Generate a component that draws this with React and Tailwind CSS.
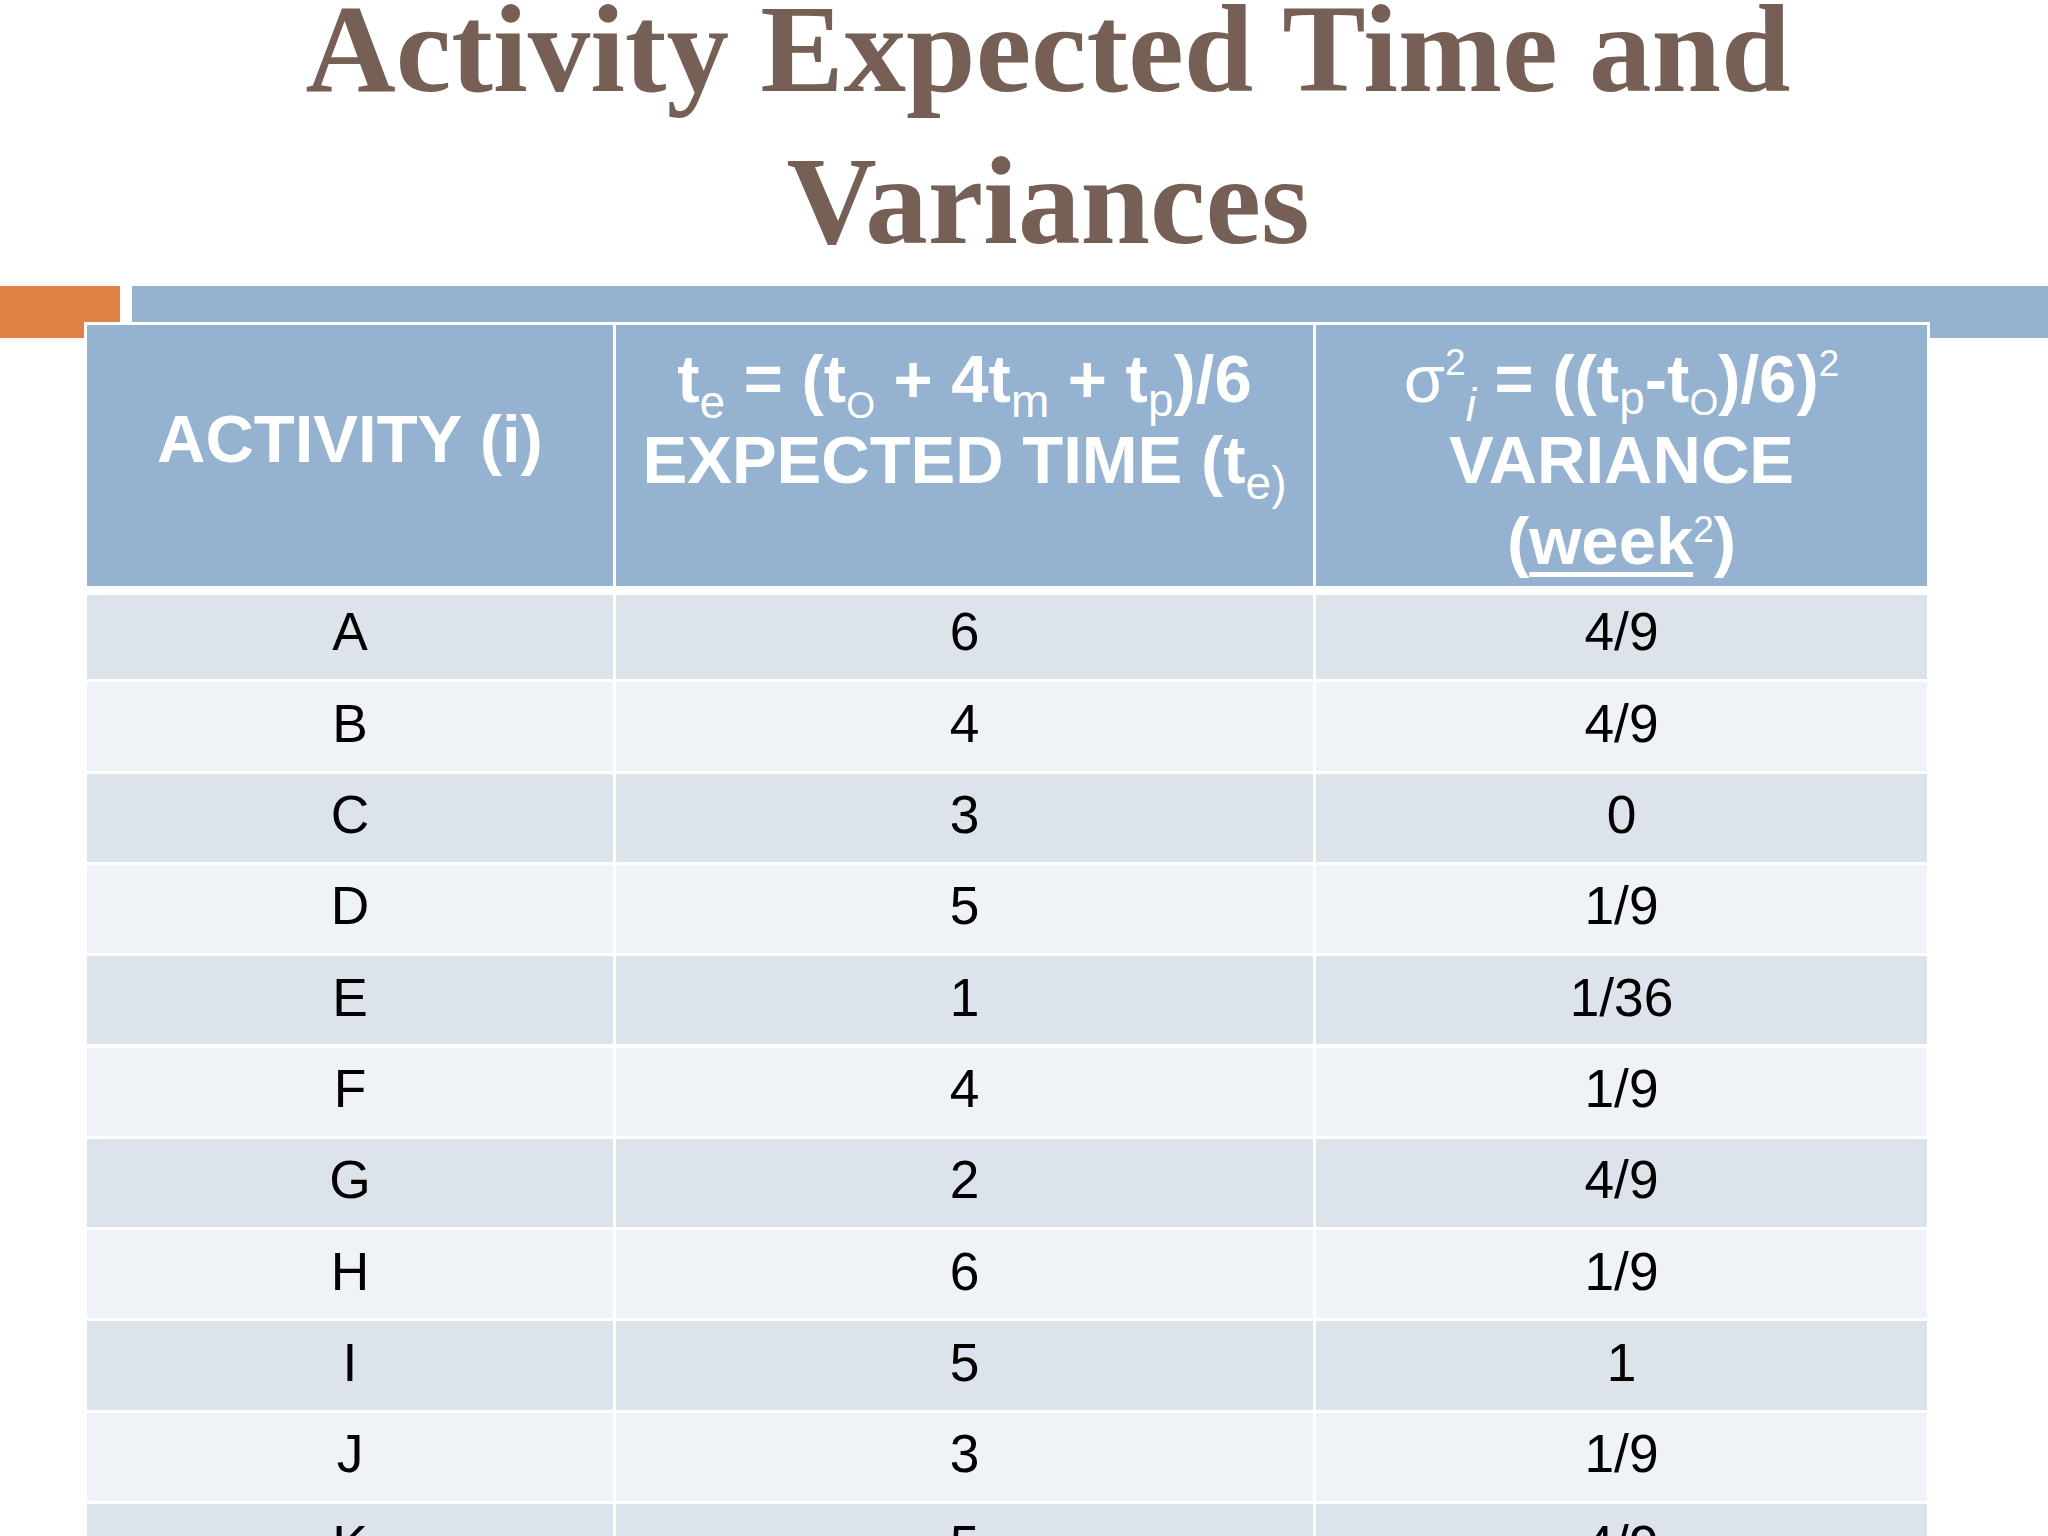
import React from "react";

const rows = [
  ["A", "6", "4/9"],
  ["B", "4", "4/9"],
  ["C", "3", "0"],
  ["D", "5", "1/9"],
  ["E", "1", "1/36"],
  ["F", "4", "1/9"],
  ["G", "2", "4/9"],
  ["H", "6", "1/9"],
  ["I", "5", "1"],
  ["J", "3", "1/9"],
  ["K", "5", "4/9"],
];

function Sub({ children, className = "" }) {
  return (
    <span className={"font-normal leading-[0] " + className}>{children}</span>
  );
}

export default function App() {
  return (
    <div className="relative h-[1536px] w-[2048px] overflow-hidden bg-white font-['Liberation_Sans',Arial,sans-serif]">
      {/* Title */}
      <div className="mt-[-26px] pl-[48px] text-center font-['Liberation_Serif','Times_New_Roman',serif] text-[125px] font-bold leading-[151.6px] text-[#765F55]">
        Activity Expected Time and
        <br />
        Variances
      </div>

      {/* Accent bars */}
      <div className="mt-[9px] flex h-[51.7px]">
        <div className="w-[120px] bg-[#DF8244]" />
        <div className="ml-[12.3px] flex-1 bg-[#95B3D0]" />
      </div>

      {/* Table */}
      <div className="relative ml-[84px] mt-[-15.4px] w-[1846px] bg-white p-[3px]">
        {/* Header */}
        <div className="grid h-[260.3px] grid-cols-[526px_697px_611px] gap-x-[3px] text-center text-[67px] font-bold leading-[81px] text-white">
          <div className="bg-[#95B3D0] pt-[73px]">ACTIVITY (i)</div>
          <div className="bg-[#95B3D0] pt-[12.3px]">
            <div>
              t<Sub className="align-[-16px] text-[46px]">e</Sub> = (t
              <Sub className="align-[-16px] text-[37px]">O</Sub> + 4t
              <Sub className="align-[-15px] text-[46px]">m</Sub> + t
              <Sub className="align-[-14px] text-[46px]">p</Sub>)/6
            </div>
            <div>
              EXPECTED TIME (t
              <Sub className="align-[-16px] text-[46px]">e)</Sub>
            </div>
          </div>
          <div className="bg-[#95B3D0] pt-[12.3px]">
            <div>
              <span className="font-normal">σ</span>
              <Sub className="align-[27px] text-[37px]">2</Sub>
              <Sub className="align-[-19px] text-[46px] italic">i</Sub> = ((t
              <Sub className="align-[-12px] text-[46px]">p</Sub>-t
              <Sub className="align-[-13px] text-[37px]">O</Sub>)/6)
              <Sub className="align-[26px] text-[37px]">2</Sub>
            </div>
            <div>VARIANCE</div>
            <div>
              (
              <span className="underline decoration-[5px] underline-offset-[8px]">
                week
              </span>
              <Sub className="align-[22px] text-[37px]">2</Sub>)
            </div>
          </div>
        </div>

        {/* Body rows */}
        {rows.map((r, i) => {
          const bg = i % 2 === 0 ? "bg-[#DCE3EB]" : "bg-[#EFF2F6]";
          const first = i === 0;
          return (
            <div
              key={r[0]}
              className={
                "grid grid-cols-[526px_697px_611px] gap-x-[3px] text-[53.3px] leading-none text-black " +
                (first ? "mt-[9px] h-[84.5px]" : "mt-[3.2px] h-[88.1px]")
              }
            >
              {r.map((c, j) => (
                <div
                  key={j}
                  className={
                    bg +
                    " flex items-center justify-center " +
                    (first ? "pb-[10.5px]" : "pb-[6px]")
                  }
                >
                  {c}
                </div>
              ))}
            </div>
          );
        })}
      </div>
    </div>
  );
}
